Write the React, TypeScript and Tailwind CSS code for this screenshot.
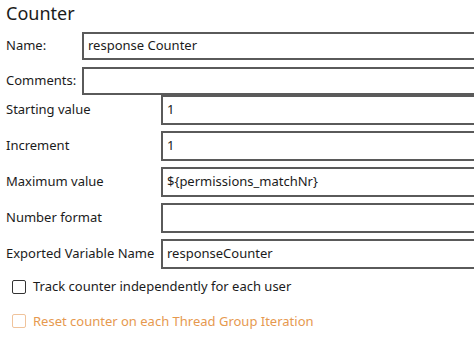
import React from "react";

interface Field {
  label: string;
  value: string;
}

const topFields: Field[] = [
  { label: "Name:", value: "response Counter" },
  { label: "Comments:", value: "" },
];

const fields: Field[] = [
  { label: "Starting value", value: "1" },
  { label: "Increment", value: "1" },
  { label: "Maximum value", value: "${permissions_matchNr}" },
  { label: "Number format", value: "" },
  { label: "Exported Variable Name", value: "responseCounter" },
];

const Box: React.FC<{ value: string; tall?: boolean }> = ({ value, tall }) => (
  <div
    className={`flex-1 -mr-4 flex items-center border-2 border-[#5a5a5a] bg-white pl-[4px] text-[13px] text-[#1b1b1b] ${
      tall ? "h-[30px]" : "h-[28px]"
    }`}
  >
    {value}
  </div>
);

export default function App() {
  return (
    <div
      className="w-[474px] h-[339px] overflow-hidden bg-white text-[#1b1b1b]"
      style={{ fontFamily: '"Noto Sans", "Open Sans", sans-serif' }}
    >
      <div className="pl-[6px] pt-[1px] text-[18px] leading-[24px]">Counter</div>

      <div className="mt-[7px] flex flex-col gap-[7px]">
        {topFields.map((f) => (
          <div key={f.label} className="flex items-center">
            <div className="w-[82px] shrink-0 pl-[6px] text-[13px]">{f.label}</div>
            <Box value={f.value} />
          </div>
        ))}
      </div>

      <div className="flex flex-col gap-[6px]">
        {fields.map((f) => (
          <div key={f.label} className="flex items-center">
            <div className="w-[161px] shrink-0 pl-[6px] text-[13px]">{f.label}</div>
            <Box value={f.value} tall />
          </div>
        ))}
      </div>

      <div className="mt-[8px] flex flex-col gap-[15px] pl-[12px] text-[13px]">
        <label className="flex items-center gap-[7px]">
          <span className="h-[14px] w-[14px] rounded-[2px] border-[1.5px] border-[#333] bg-white" />
          <span>Track counter independently for each user</span>
        </label>
        <label className="flex items-center gap-[7px] text-[#e6994f]">
          <span className="h-[14px] w-[14px] rounded-[2px] border-[1.5px] border-[#f0c39b] bg-white" />
          <span>Reset counter on each Thread Group Iteration</span>
        </label>
      </div>
    </div>
  );
}
